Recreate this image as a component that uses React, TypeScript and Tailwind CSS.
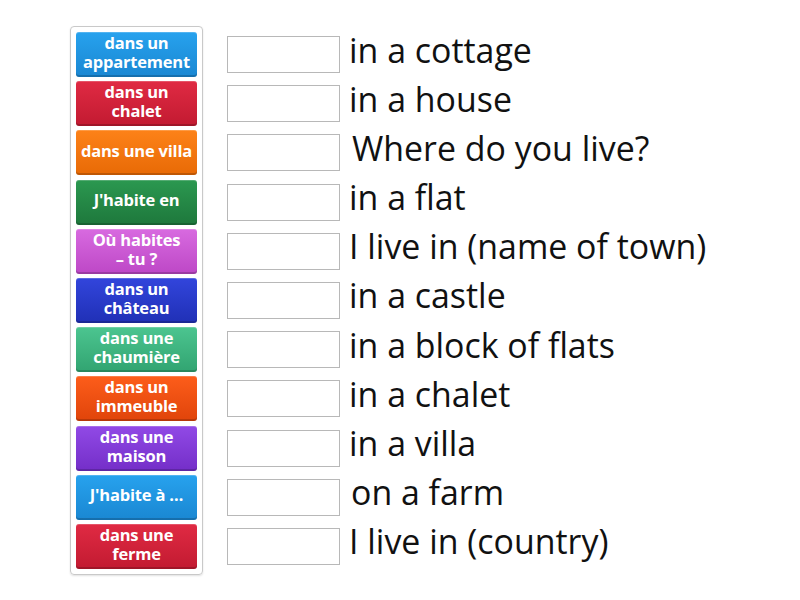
const tiles = [
  { label: "dans un appartement", cls: "bg-gradient-to-b from-[#27a2ee] to-[#1a87d2]" },
  { label: "dans un chalet", cls: "bg-gradient-to-b from-[#e02a43] to-[#c21a31]" },
  { label: "dans une villa", cls: "bg-gradient-to-b from-[#fd8218] to-[#e86a05]" },
  { label: "J'habite en", cls: "bg-gradient-to-b from-[#2b9850] to-[#1e783c]" },
  { label: "Où habites\n– tu ?", cls: "bg-gradient-to-b from-[#d86ae0] to-[#bd47c6]" },
  { label: "dans un château", cls: "bg-gradient-to-b from-[#3245dc] to-[#2030b6]" },
  { label: "dans une chaumière", cls: "bg-gradient-to-b from-[#4cc590] to-[#31a471]" },
  { label: "dans un immeuble", cls: "bg-gradient-to-b from-[#fd5d1a] to-[#e0440a]" },
  { label: "dans une maison", cls: "bg-gradient-to-b from-[#9149e6] to-[#742ec8]" },
  { label: "J'habite à …", cls: "bg-gradient-to-b from-[#27a2ee] to-[#1a87d2]" },
  { label: "dans une ferme", cls: "bg-gradient-to-b from-[#e02a43] to-[#c21a31]" }
];

const answers = [
  { text: "in a cottage", pad: "" },
  { text: "in a house", pad: "" },
  { text: "Where do you live?", pad: "pl-[3px]" },
  { text: "in a flat", pad: "" },
  { text: "I live in (name of town)", pad: "" },
  { text: "in a castle", pad: "" },
  { text: "in a block of flats", pad: "" },
  { text: "in a chalet", pad: "" },
  { text: "in a villa", pad: "" },
  { text: "on a farm", pad: "pl-[2px]" },
  { text: "I live in (country)", pad: "" }
];

function Tile({ label, cls }: { label: string; cls: string }) {
  return (
    <div
      className={`flex h-[45px] w-[121px] items-center justify-center whitespace-pre-line rounded-[3px] px-[2px] pb-[5px] text-center text-[16.5px] font-bold leading-[19px] tracking-[-0.2px] text-white shadow-[inset_0_-2px_0_rgba(0,0,0,0.18),inset_0_1px_0_rgba(255,255,255,0.2)] ${cls}`}
    >
      {label}
    </div>
  );
}

export default function App() {
  return (
    <div
      className="h-[600px] w-[800px] bg-white"
      style={{ fontFamily: "'Open Sans', 'DejaVu Sans', sans-serif" }}
    >
      <div className="flex items-start pl-[70px] pt-[26px]">
        <div className="flex flex-col gap-[4.2px] rounded-[4px] border border-[#c9c9c9] p-[5px] shadow-[0_1px_2px_rgba(0,0,0,0.12)]">
          {tiles.map((t) => (
            <Tile key={t.label} {...t} />
          ))}
        </div>
        <div className="ml-[24px] mt-[6px] flex flex-col gap-[4.2px]">
          {answers.map((a) => (
            <div key={a.text} className="flex h-[45px] items-center">
              <div className="h-[37px] w-[113px] border border-[#b8b8b8] bg-white" />
              <span className={`ml-[9px] mb-[8px] whitespace-nowrap text-[33.9px] leading-none text-[#111] ${a.pad}`}>
                {a.text}
              </span>
            </div>
          ))}
        </div>
      </div>
    </div>
  );
}
